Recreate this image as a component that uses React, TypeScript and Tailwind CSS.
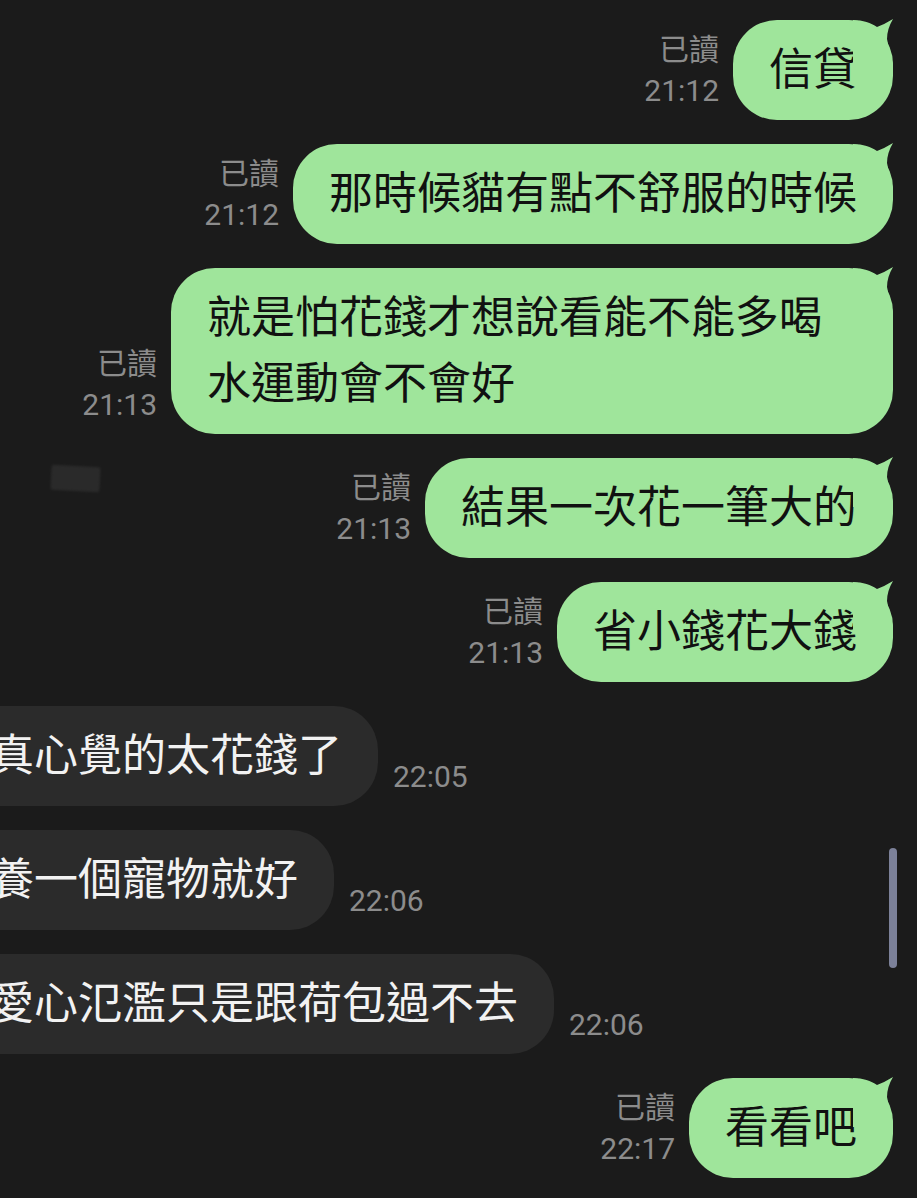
import React from 'react'

type Msg = {
  side: 'me' | 'them'
  text: string
  time: string
}

const messages: Msg[] = [
  { side: 'me', text: '信貸', time: '21:12' },
  { side: 'me', text: '那時候貓有點不舒服的時候', time: '21:12' },
  { side: 'me', text: '就是怕花錢才想說看能不能多喝水運動會不會好', time: '21:13' },
  { side: 'me', text: '結果一次花一筆大的', time: '21:13' },
  { side: 'me', text: '省小錢花大錢', time: '21:13' },
  { side: 'them', text: '真心覺的太花錢了', time: '22:05' },
  { side: 'them', text: '養一個寵物就好', time: '22:06' },
  { side: 'them', text: '愛心氾濫只是跟荷包過不去', time: '22:06' },
  { side: 'me', text: '看看吧', time: '22:17' },
]

function Tail() {
  return (
    <svg
      className="absolute right-0 top-[-1px]"
      width="40"
      height="50"
      viewBox="0 0 40 50"
    >
      <path
        d="M0,1 C10,1 18,4 24,8 Q32,5 40,0 Q34,10 34,20 Q36,30 40,45 L40,50 L0,50 Z"
        fill="#9fe59b"
      />
    </svg>
  )
}

function MyRow({ msg }: { msg: Msg }) {
  return (
    <div className="flex justify-end items-end gap-[14px]">
      <div className="flex flex-col items-end text-[30px] leading-[41px] text-[#8c8c8c] pb-[9px] shrink-0">
        <span>已讀</span>
        <span>{msg.time}</span>
      </div>
      <div className="relative max-w-[722px]">
        <div className="rounded-[44px] bg-[#9fe59b] px-[36px] py-[17px] text-[44px] leading-[66px] text-[#111111]">
          {msg.text}
        </div>
        <Tail />
      </div>
    </div>
  )
}

function TheirRow({ msg }: { msg: Msg }) {
  return (
    <div className="flex justify-start items-end gap-[15px] -ml-[46px]">
      <div className="rounded-[44px] bg-[#2b2b2b] px-[36px] py-[17px] text-[44px] leading-[66px] text-[#f2f2f2] whitespace-nowrap">
        {msg.text}
      </div>
      <div className="text-[30px] leading-[41px] text-[#8c8c8c] pb-[9px] shrink-0">{msg.time}</div>
    </div>
  )
}

export default function App() {
  return (
    <div
      className="relative h-[1198px] w-full overflow-hidden bg-[#1b1b1b]"
      style={{ fontFamily: 'Roboto, "Noto Sans CJK TC", sans-serif' }}
    >
      <div className="flex flex-col gap-[24px] pt-[20px] pr-[24px]">
        {messages.map((m, i) =>
          m.side === 'me' ? <MyRow key={i} msg={m} /> : <TheirRow key={i} msg={m} />
        )}
      </div>

      {/* faint smudge on the left */}
      <div className="absolute left-[51px] top-[466px] h-[25px] w-[49px] rotate-[3deg] rounded-[3px] bg-[#2a2a2a] blur-[1px]" />

      {/* scroll indicator */}
      <div className="absolute left-[889px] top-[848px] h-[120px] w-[8px] rounded-full bg-[#7c8199]" />
    </div>
  )
}
